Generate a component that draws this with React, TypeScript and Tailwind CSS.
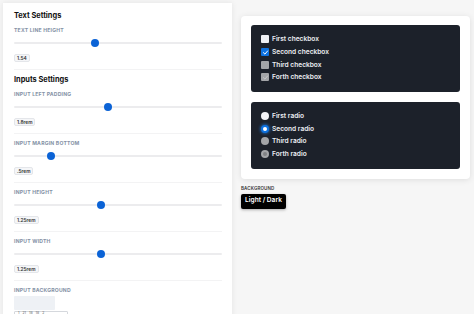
const FONT = "font-['Inter','Noto_Sans',sans-serif]";

type RangeProps = { label: string; pos: number; value: string; first?: boolean };

function RangeSetting({ label, pos, value, first }: RangeProps) {
  return (
    <div className={first ? 'mt-[5.5px]' : 'mt-[6px]'}>
      <div className="text-[5.1px] leading-[7px] font-bold tracking-[0.04em] text-[#8592a6] uppercase">{label}</div>
      {/* slider */}
      <div className="relative mt-[5.5px] h-[8px] flex items-center">
        <div className="h-[2px] w-full rounded-full bg-[#ececee]" />
        <div
          className="absolute top-0 h-[8px] w-[8px] -translate-x-1/2 rounded-full bg-[#0b63d6]"
          style={{ left: `${pos}%` }}
        />
      </div>
      <div className="mt-[7px] flex">
        <span className="h-[8px] rounded-[2px] border border-[#e4e6ea] bg-[#f5f6f8] px-[2px] text-[4.8px] leading-[6px] font-semibold text-[#333]">
          {value}
        </span>
      </div>
      <div className="mt-[6.5px] h-px bg-[#f3f3f4]" />
    </div>
  );
}

function Check({ state }: { state: 'off' | 'on' | 'dis' | 'dison' }) {
  const bg =
    state === 'off' ? 'bg-[#eef0f4]' : state === 'on' ? 'bg-[#0d72e0]' : 'bg-[#a3a5a8]';
  return (
    <span className={`flex h-[8px] w-[8px] shrink-0 items-center justify-center rounded-[1px] ${bg}`}>
      {(state === 'on' || state === 'dison') && (
        <svg viewBox="0 0 10 10" className="h-[7px] w-[7px]">
          <path
            d="M2 5.2 L4.2 7.3 L8 2.8"
            fill="none"
            stroke={state === 'on' ? '#fff' : '#c9cacc'}
            strokeWidth="1.4"
            strokeLinecap="round"
            strokeLinejoin="round"
          />
        </svg>
      )}
    </span>
  );
}

function Radio({ state }: { state: 'off' | 'on' | 'dis' | 'dison' }) {
  if (state === 'on')
    return (
      <span className="flex h-[8px] w-[8px] shrink-0 items-center justify-center rounded-full bg-[#0d72e0] shadow-[0_0_3px_1px_rgba(30,130,240,0.6)]">
        <span className="h-[3.5px] w-[3.5px] rounded-full bg-white" />
      </span>
    );
  if (state === 'dison')
    return (
      <span className="flex h-[8px] w-[8px] shrink-0 items-center justify-center rounded-full bg-[#a3a5a8]">
        <span className="h-[4px] w-[4px] rounded-full bg-[#7f8184]" />
      </span>
    );
  return (
    <span className={`h-[8px] w-[8px] shrink-0 rounded-full ${state === 'off' ? 'bg-[#f3f4f7]' : 'bg-[#a3a5a8]'}`} />
  );
}

const STATES = ['off', 'on', 'dis', 'dison'] as const;

export default function App() {
  return (
    <div className={`${FONT} flex h-[314px] w-[474px] overflow-hidden bg-[#f6f6f6]`}>
      {/* Settings panel */}
      <div className="ml-[3px] mt-[3px] h-[340px] w-[229px] shrink-0 bg-white pl-[11px] pr-[10px] pt-[8px] shadow-[0_0_6px_rgba(0,0,0,0.08)]">
        <h2 className="text-[7.4px] leading-[10px] font-bold text-[#111]">Text Settings</h2>
        <RangeSetting first label="Text line height" pos={39} value="1.54" />

        <h2 className="mt-[5px] text-[7.4px] leading-[10px] font-bold text-[#111]">Inputs Settings</h2>
        <RangeSetting label="Input left padding" pos={45} value="1.8rem" />
        <RangeSetting label="Input margin bottom" pos={18} value=".5rem" />
        <RangeSetting label="Input height" pos={42} value="1.25rem" />
        <RangeSetting label="Input width" pos={42} value="1.25rem" />

        <div className="mt-[6px] text-[5.1px] leading-[7px] font-bold tracking-[0.04em] text-[#8592a6] uppercase">
          Input background
        </div>
        <div className="mt-[2.5px] h-[14px] w-[41px] rounded-[1px] bg-[#eef1f5]" />
        <div className="mt-[1px] flex h-[5px] w-[54px] items-center gap-[3px] rounded-[1px] border border-[#d5d8dd] px-[3px] text-[3.5px] leading-[3px] text-[#666]">
          <span>1</span>
          <span>21</span>
          <span>18</span>
          <span>18</span>
          <span>2</span>
        </div>
      </div>

      {/* Preview column */}
      <div className="ml-[9px] w-[229px] shrink-0 pt-[16px]">
        <div className="flex flex-col gap-[10px] rounded-[4px] bg-white px-[10px] pt-[9px] pb-[10px] shadow-[0_1px_6px_rgba(0,0,0,0.1)]">
          <div className="rounded-[3px] bg-[#1c212a] px-[10px] py-[8px]">
            {['First checkbox', 'Second checkbox', 'Third checkbox', 'Forth checkbox'].map((t, i) => (
              <div key={t} className="flex h-[12.7px] items-center gap-[3px]">
                <Check state={STATES[i]} />
                <span className="text-[6.6px] leading-[8px] font-semibold text-[#eceef2]">{t}</span>
              </div>
            ))}
          </div>
          <div className="rounded-[3px] bg-[#1c212a] px-[10px] py-[8px]">
            {['First radio', 'Second radio', 'Third radio', 'Forth radio'].map((t, i) => (
              <div key={t} className="flex h-[12.7px] items-center gap-[3px]">
                <Radio state={STATES[i]} />
                <span className="text-[6.6px] leading-[8px] font-semibold text-[#eceef2]">{t}</span>
              </div>
            ))}
          </div>
        </div>

        <div className="mt-[7px] text-[4.5px] leading-[5px] font-semibold tracking-[0.03em] text-[#333] uppercase">
          Background
        </div>
        <button className="mt-[3px] flex h-[15px] w-[45px] items-center justify-center rounded-[2px] bg-black text-[6.6px] font-semibold text-white shadow-[0_1px_3px_rgba(0,0,0,0.3)]">
          Light / Dark
        </button>
      </div>
    </div>
  );
}
